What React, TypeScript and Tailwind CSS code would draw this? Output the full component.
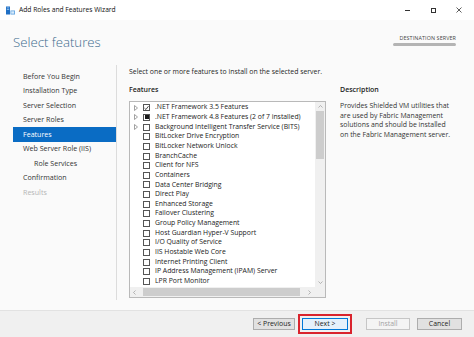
import React from "react";

type Feature = { name: string; state?: "checked" | "partial"; expand?: boolean };

const features: Feature[] = [
  { name: ".NET Framework 3.5 Features", state: "checked", expand: true },
  { name: ".NET Framework 4.8 Features (2 of 7 installed)", state: "partial", expand: true },
  { name: "Background Intelligent Transfer Service (BITS)", expand: true },
  { name: "BitLocker Drive Encryption" },
  { name: "BitLocker Network Unlock" },
  { name: "BranchCache" },
  { name: "Client for NFS" },
  { name: "Containers" },
  { name: "Data Center Bridging" },
  { name: "Direct Play" },
  { name: "Enhanced Storage" },
  { name: "Failover Clustering" },
  { name: "Group Policy Management" },
  { name: "Host Guardian Hyper-V Support" },
  { name: "I/O Quality of Service" },
  { name: "IIS Hostable Web Core" },
  { name: "Internet Printing Client" },
  { name: "IP Address Management (IPAM) Server" },
  { name: "LPR Port Monitor" },
];

const steps = [
  { label: "Before You Begin" },
  { label: "Installation Type" },
  { label: "Server Selection" },
  { label: "Server Roles" },
  { label: "Features", active: true },
  { label: "Web Server Role (IIS)" },
  { label: "Role Services", sub: true },
  { label: "Confirmation" },
  { label: "Results", disabled: true },
];

function Checkbox({ state }: { state?: "checked" | "partial" }) {
  return (
    <span className="w-[7px] h-[7px] border border-[#555] bg-white flex items-center justify-center shrink-0">
      {state === "checked" && (
        <svg width="6" height="6" viewBox="0 0 6 6">
          <path d="M0.6 3.2 L2.3 4.8 L5.4 0.8" stroke="#222" strokeWidth="1" fill="none" />
        </svg>
      )}
      {state === "partial" && <span className="w-[4px] h-[4px] bg-[#1a1a1a]" />}
    </span>
  );
}

function Expander() {
  return (
    <svg width="4" height="6" viewBox="0 0 4 6">
      <path d="M0.5 0.5 L3.5 3 L0.5 5.5 Z" stroke="#8a8a8a" strokeWidth="0.8" fill="none" />
    </svg>
  );
}

function WizardIcon() {
  return (
    <svg width="9" height="9" viewBox="0 0 9 9">
      <rect x="0" y="0.5" width="4" height="8" fill="#1f6fc5" />
      <rect x="0.8" y="1.5" width="2.4" height="0.8" fill="#9cc8f2" />
      <rect x="0.8" y="3" width="2.4" height="0.8" fill="#9cc8f2" />
      <rect x="4.5" y="4.5" width="4.5" height="4" fill="#5a9fe0" />
      <rect x="5.2" y="5.3" width="3" height="2.4" fill="#d8ebfb" />
    </svg>
  );
}

export default function App() {
  return (
    <div className="w-[474px] h-[337px] overflow-hidden flex flex-col bg-[#fafafa] text-[#1e1e1e] font-['Open_Sans','Noto_Sans',sans-serif]">
      {/* Title bar */}
      <div className="h-[20px] bg-white flex items-center shrink-0">
        <div className="ml-[6px] mr-[4px] flex items-center">
          <WizardIcon />
        </div>
        <span className="text-[6.7px] leading-none text-[#111]">Add Roles and Features Wizard</span>
        <div className="ml-auto mr-[2px] flex items-center h-full">
          <div className="w-[26px] h-full flex items-center justify-center">
            <span className="w-[5px] h-px bg-[#333]" />
          </div>
          <div className="w-[26px] h-full flex items-center justify-center">
            <span className="w-[5px] h-[5px] border border-[#333]" />
          </div>
          <div className="w-[26px] h-full flex items-center justify-center">
            <svg width="6" height="6" viewBox="0 0 6 6">
              <path d="M0.5 0.5 L5.5 5.5 M5.5 0.5 L0.5 5.5" stroke="#333" strokeWidth="0.8" />
            </svg>
          </div>
        </div>
      </div>

      {/* Header */}
      <div className="h-[43px] shrink-0 flex items-start justify-between">
        <h1 className="ml-[13px] mt-[13px] text-[13.2px] leading-[18px] font-light text-[#3d6b8e]">Select features</h1>
        <div className="mr-[18px] mt-[15px] flex flex-col items-end">
          <span className="text-[5.4px] leading-[6px] tracking-[0.1px] text-[#444]">DESTINATION SERVER</span>
          <span className="mt-[2px] w-[63px] h-[3px] rounded-full bg-[#b4b4b4] blur-[0.5px]" />
        </div>
      </div>

      {/* Body */}
      <div className="flex-1 flex min-h-0 pb-[10px]">
        <nav className="w-[117px] shrink-0 border-r border-[#dcdcdc] mt-[2px] pt-[4px] pl-[13px]">
          {steps.map((s) => (
            <div
              key={s.label}
              className={
                "h-[14.5px] flex items-center text-[7.1px] leading-none " +
                (s.sub ? "pl-[21px] " : "pl-[10px] ") +
                (s.active ? "bg-[#0a6cc4] text-white " : s.disabled ? "text-[#b5b5b5] " : "text-[#333] ")
              }
            >
              {s.label}
            </div>
          ))}
        </nav>

        <section className="flex-1 pl-[12px] pr-[10px] pt-[4px]">
          <p className="text-[6.9px] leading-[10px]">Select one or more features to install on the selected server.</p>
          <div className="flex mt-[8px] gap-[14px]">
            <div className="w-[197px] shrink-0">
              <div className="text-[7px] leading-[10px] font-semibold text-[#222]">Features</div>
              <div className="mt-[6px] h-[197px] border border-[#b9b9b9] bg-white flex flex-col">
                <div className="flex-1 flex min-h-0">
                  <ul className="flex-1 overflow-hidden pt-[1px]">
                    {features.map((f) => (
                      <li key={f.name} className="h-[9.65px] flex items-center text-[6.85px] leading-none whitespace-nowrap">
                        <span className="w-[13px] pl-[4px] flex items-center shrink-0">{f.expand && <Expander />}</span>
                        <Checkbox state={f.state} />
                        <span className="ml-[5px] text-[#222]">{f.name}</span>
                      </li>
                    ))}
                  </ul>
                  <div className="w-[10px] bg-[#f0f0f0] flex flex-col items-center">
                    <svg className="mt-[3px]" width="5" height="3" viewBox="0 0 5 3">
                      <path d="M0.5 2.5 L2.5 0.5 L4.5 2.5" stroke="#9a9a9a" strokeWidth="0.7" fill="none" />
                    </svg>
                    <div className="mt-[3px] w-[8px] h-[48px] bg-[#cdcdcd]" />
                    <svg className="mt-auto mb-[3px]" width="5" height="3" viewBox="0 0 5 3">
                      <path d="M0.5 0.5 L2.5 2.5 L4.5 0.5" stroke="#9a9a9a" strokeWidth="0.7" fill="none" />
                    </svg>
                  </div>
                </div>
                <div className="h-[10px] flex bg-[#f0f0f0]">
                  <div className="flex-1 flex items-center">
                    <svg className="ml-[3px]" width="3" height="5" viewBox="0 0 3 5">
                      <path d="M2.5 0.5 L0.5 2.5 L2.5 4.5" stroke="#9a9a9a" strokeWidth="0.7" fill="none" />
                    </svg>
                    <div className="ml-[7px] w-[157px] h-[8px] bg-[#cdcdcd]" />
                    <svg className="ml-auto mr-[4px]" width="3" height="5" viewBox="0 0 3 5">
                      <path d="M0.5 0.5 L2.5 2.5 L0.5 4.5" stroke="#9a9a9a" strokeWidth="0.7" fill="none" />
                    </svg>
                  </div>
                  <div className="w-[10px] bg-[#f0f0f0]" />
                </div>
              </div>
            </div>
            <div className="w-[112px]">
              <div className="text-[7px] leading-[10px] font-semibold text-[#222]">Description</div>
              <p className="mt-[6px] text-[6.9px] leading-[9.65px] text-[#333]">
                Provides Shielded VM utilities that are used by Fabric Management solutions and should be installed on
                the Fabric Management server.
              </p>
            </div>
          </div>
        </section>
      </div>

      {/* Footer */}
      <div className="h-[27px] shrink-0 bg-[#f0f0f0] border-t border-[#e2e2e2] flex items-center justify-end pr-[12px]">
        <button className="w-[42px] h-[12.5px] bg-[#e1e1e1] border border-[#adadad] text-[6.9px] leading-none text-[#222]">
          &lt; Previous
        </button>
        <div className="ml-[3px] flex border-2 border-[#d9232d] px-[2px] py-[2px]">
          <button className="w-[46px] h-[12.5px] bg-[#e5f1fb] border border-[#0078d7] text-[6.9px] leading-none text-[#222]">
            Next &gt;
          </button>
        </div>
        <button className="ml-[14px] w-[44px] h-[12.5px] bg-[#f4f4f4] border border-[#c6c6c6] text-[6.9px] leading-none text-[#a3a3a3]">
          Install
        </button>
        <button className="ml-[7px] w-[45px] h-[12.5px] bg-[#e1e1e1] border border-[#adadad] text-[6.9px] leading-none text-[#222]">
          Cancel
        </button>
      </div>
    </div>
  );
}
